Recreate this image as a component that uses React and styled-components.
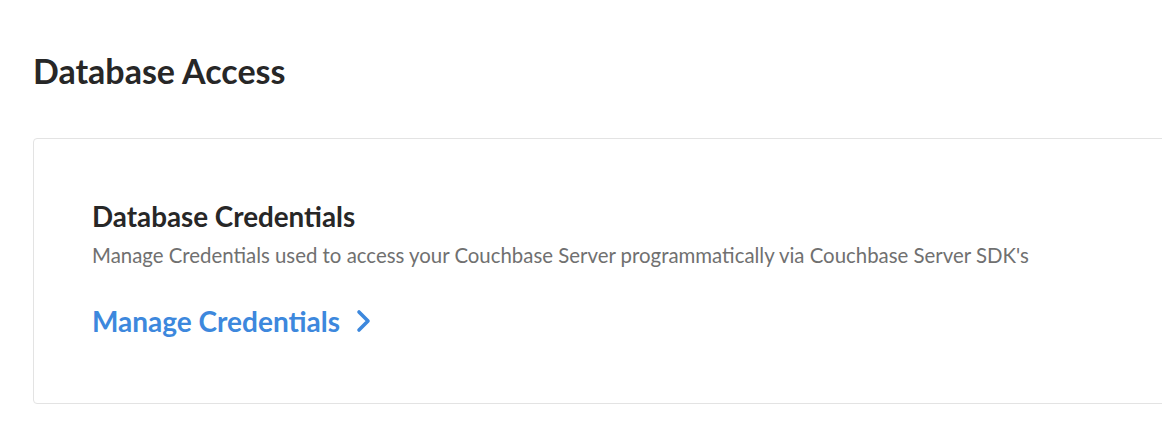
import React from 'react';
import styled, { createGlobalStyle } from 'styled-components';

const GlobalStyle = createGlobalStyle`
  html, body {
    margin: 0;
    padding: 0;
    background: #ffffff;
    overflow: hidden;
  }
  body {
    font-family: Lato, "Open Sans", "Liberation Sans", sans-serif;
    -webkit-font-smoothing: antialiased;
  }
`;

const Page = styled.div`
  width: 1162px;
  height: 428px;
  padding: 51px 0 0 33px;
  box-sizing: border-box;
  overflow: hidden;
`;

const PageTitle = styled.h1`
  margin: 0;
  font-size: 34px;
  line-height: 40px;
  font-weight: 700;
  color: #272727;
`;

const Card = styled.section`
  margin-top: 47px;
  width: 1160px;
  height: 266px;
  box-sizing: border-box;
  border: 1px solid #e3e3e3;
  border-radius: 4px;
  padding: 61px 0 0 58px;
`;

const CardTitle = styled.h2`
  margin: 0;
  font-size: 27.8px;
  line-height: 34px;
  font-weight: 700;
  color: #272727;
`;

const CardText = styled.p`
  margin: 8px 0 0;
  font-size: 20.4px;
  line-height: 26px;
  color: #707070;
`;

const Action = styled.a`
  margin-top: 36px;
  display: inline-flex;
  align-items: center;
  gap: 15px;
  font-size: 28px;
  line-height: 34px;
  font-weight: 700;
  color: #3d88dd;
  text-decoration: none;
  cursor: pointer;
`;

const Chevron = () => (
  <svg width="17" height="24" viewBox="0 0 17 24" fill="none">
    <path d="M4 3 L13 12 L4 21" stroke="#3d88dd" strokeWidth="3.6" strokeLinecap="round" strokeLinejoin="round" />
  </svg>
);

const App = () => {
  return (
    <Page>
      <GlobalStyle />
      <PageTitle>Database Access</PageTitle>
      <Card>
        <CardTitle>Database Credentials</CardTitle>
        <CardText>Manage Credentials used to access your Couchbase Server programmatically via Couchbase Server SDK's</CardText>
        <Action>
          Manage Credentials
          <Chevron />
        </Action>
      </Card>
    </Page>
  );
};

export default App;
